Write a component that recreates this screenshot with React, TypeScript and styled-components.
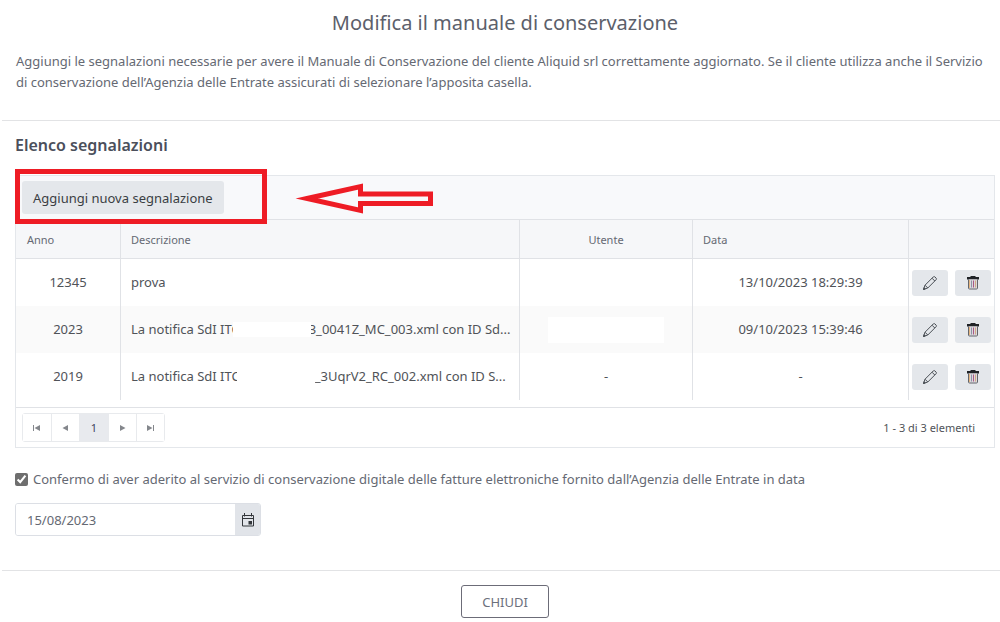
import React from "react";
import styled, { createGlobalStyle } from "styled-components";

const GlobalStyle = createGlobalStyle`
  *, *::before, *::after { box-sizing: border-box; }
  body { margin: 0; background: #fff; }
  body, button, input { font-family: "Noto Sans", "Open Sans", sans-serif; }
`;

const Dialog = styled.main`
  color: #656973;
  font-size: 13px;
  line-height: 21px;
`;

const Intro = styled.header`
  padding: 9px 16px 27px;
`;

const Title = styled.h1`
  margin: 0 0 14px;
  padding-left: 10px;
  color: #5c606b;
  font-size: 20px;
  line-height: 28px;
  font-weight: 400;
  text-align: center;
`;

const Lead = styled.p`
  margin: 0;
`;

const Section = styled.section`
  margin-left: 2px;
  padding: 12px 5px 34px 13px;
  border-top: 1px solid #e2e3e5;
  border-bottom: 1px solid #e2e3e5;
`;

const SectionTitle = styled.h2`
  margin: 0 0 18px;
  color: #4b4f5b;
  font-size: 16px;
  line-height: 24px;
  font-weight: 600;
`;

const Grid = styled.div`
  border: 1px solid #e4e7eb;
`;

const Toolbar = styled.div`
  position: relative;
  display: flex;
  padding: 5px 6px;
  background: #f8f9fb;
`;

const SoftButton = styled.button<{ $compact?: boolean }>`
  display: inline-flex;
  align-items: center;
  justify-content: center;
  width: ${(p) => (p.$compact ? "36px" : "auto")};
  height: ${(p) => (p.$compact ? "26px" : "33px")};
  padding: ${(p) => (p.$compact ? "0" : "0 11px")};
  border: 0;
  border-radius: 3px;
  background: #e4e7eb;
  color: #3a3e43;
  font-size: 13px;
`;

const Highlight = styled.div`
  position: absolute;
  top: -7px;
  left: -1px;
  width: 252px;
  height: 55px;
  border: 5px solid #ee1c25;
  pointer-events: none;
`;

const Pointer = styled.svg`
  position: absolute;
  top: 5px;
  left: 279px;
  pointer-events: none;
`;

const Table = styled.table`
  width: 100%;
  table-layout: fixed;
  border-collapse: separate;
  border-spacing: 0;
  margin-bottom: 7px;
`;

const HeadCell = styled.th<{ $center?: boolean }>`
  height: 40px;
  padding: 0 10px;
  border: solid #e0e2e6;
  border-width: 1px 0 1px 1px;
  background: #f6f7f9;
  color: #656973;
  font-size: 11px;
  font-weight: 400;
  text-align: ${(p) => (p.$center ? "center" : "left")};
  &:first-child { border-left: 0; padding-left: 11px; }
`;

const Row = styled.tr`
  &:nth-child(even) { background: #fafafa; }
`;

const Cell = styled.td<{ $center?: boolean }>`
  height: 47px;
  padding: 0 10px;
  border-left: 1px solid #e0e2e6;
  color: #505358;
  text-align: ${(p) => (p.$center ? "center" : "left")};
  white-space: nowrap;
  &:first-child { border-left: 0; }
`;

const ActionCell = styled(Cell)`
  padding: 0 3px;
`;

const Actions = styled.div`
  display: flex;
  justify-content: space-between;
`;

const Description = styled.div`
  display: flex;
  align-items: center;
`;

const InlineRedaction = styled.span<{ $before: number; $after: number }>`
  position: relative;
  flex: none;
  width: 78px;
  height: 15px;
  margin: 0 ${(p) => -p.$after}px 0 ${(p) => -p.$before}px;
  background: #fff;
`;

const UserRedaction = styled.div`
  width: 116px;
  height: 26px;
  margin: 0 auto;
  background: #fff;
`;

const Pager = styled.nav`
  display: flex;
  align-items: center;
  justify-content: space-between;
  padding: 5px 19px 5px 6px;
  border-top: 1px solid #e0e2e6;
  color: #505358;
  font-size: 11px;
`;

const Pages = styled.div`
  display: flex;
  border: 1px solid #e8eaed;
  border-radius: 3px;
`;

const PageButton = styled.button<{ $current?: boolean }>`
  display: flex;
  align-items: center;
  justify-content: center;
  width: ${(p) => (p.$current ? "29px" : "28px")};
  height: 27px;
  padding: 0;
  border: 0;
  border-left: 1px solid #e8eaed;
  background: ${(p) => (p.$current ? "#e8eaee" : "#fff")};
  color: ${(p) => (p.$current ? "#42455c" : "#84878c")};
  font-size: 11px;
  &:first-child { border-left: 0; }
`;

const Consent = styled.label`
  display: flex;
  align-items: center;
  gap: 5px;
  margin: 21px 0 13px;
`;

const Tick = styled.input`
  width: 13px;
  height: 13px;
  margin: 0;
  accent-color: #6e6e6e;
`;

const DateField = styled.div`
  display: flex;
  width: 246px;
  height: 33px;
  border: 1px solid #dcdfe5;
  border-radius: 3px;
  overflow: hidden;
`;

const DateInput = styled.input`
  flex: 1;
  min-width: 0;
  padding: 1px 11px 0;
  border: 0;
  color: #656973;
  font-size: 13px;
`;

const CalendarButton = styled.button`
  display: flex;
  align-items: center;
  justify-content: center;
  width: 25px;
  padding: 0;
  border: 0;
  background: #e1e4e9;
  color: #33363b;
`;

const Footer = styled.footer`
  display: flex;
  justify-content: center;
  padding: 14px 0 4px 10px;
`;

const CloseButton = styled.button`
  width: 88px;
  height: 33px;
  padding: 0;
  border: 1px solid #6c6c78;
  border-radius: 3px;
  background: #fff;
  color: #6c707c;
  font-size: 13px;
`;

const PencilIcon = () => (
  <svg width="16" height="16" viewBox="0 0 16 16" fill="none" stroke="#4b5056" strokeWidth="1" strokeLinejoin="round" aria-hidden="true">
    <path d="M1.5 14.5 3 10.2 11.3 1.9Q12.1 1.2 12.9 1.9L14.1 3.1Q14.8 3.9 14.1 4.7L5.8 13Z" />
    <path d="M3 10.2 5.8 13M10 3.2l2.8 2.8" />
    <path d="m1.5 14.5.6-1.8 1.2 1.2Z" fill="#3b4046" />
  </svg>
);

const TrashIcon = () => (
  <svg width="14" height="16" viewBox="0 0 14 16" fill="none" aria-hidden="true">
    <path d="M1 2h3.500V1h5v1H13v2.500H1Z" fill="#1f2226" />
    <path d="M3 4.500h8v9H3Z" fill="#dcd9de" />
    <path d="M2.500 4.500v8.500q0 1 1 1h7q1 0 1-1V4.500" stroke="#63656a" />
    <path d="M3.500 5v8" stroke="#e5b681" />
    <path d="M5.500 5.500v7" stroke="#8d93a6" />
    <path d="M7.500 5.500v7" stroke="#a85a86" />
    <path d="M9.500 5.500v7" stroke="#d0a987" />
  </svg>
);

const CalendarIcon = () => (
  <svg width="14" height="14" viewBox="0 0 14 14" fill="none" stroke="currentColor" aria-hidden="true">
    <path d="M1.5 2.5h11v10.5h-11ZM1.5 5.5h11M3.5 0v3.5M10.5 0v3.5" />
    <path d="M7.5 8h3.5v3.5H7.5Z" fill="currentColor" stroke="none" />
  </svg>
);

const pagerShapes = {
  first: "M0 1h1v6H0ZM7 1v6L1.5 4Z",
  prev: "M6 1v6L0.5 4Z",
  next: "M1 1v6l5.5-3Z",
  last: "M0 1v6l5.5-3ZM6 1h1v6H6Z",
};

const PagerIcon = ({ kind }: { kind: keyof typeof pagerShapes }) => (
  <svg width="8" height="8" viewBox="0 0 8 8" fill="currentColor" aria-hidden="true">
    <path d={pagerShapes[kind]} />
  </svg>
);

const rows = [
  { year: "12345", description: "prova", user: null, date: "13/10/2023 18:29:39" },
  {
    year: "2023",
    description: (
      <Description>
        La notifica SdI ITC
        <InlineRedaction $before={7} $after={2} />
        3_0041Z_MC_003.xml con ID Sd...
      </Description>
    ),
    user: <UserRedaction />,
    date: "09/10/2023 15:39:46",
  },
  {
    year: "2019",
    description: (
      <Description>
        La notifica SdI ITC
        <InlineRedaction $before={3} $after={0} />
        _3UqrV2_RC_002.xml con ID S...
      </Description>
    ),
    user: "-",
    date: "-",
  },
];

export default function App() {
  return (
    <Dialog>
      <GlobalStyle />
      <Intro>
        <Title>Modifica il manuale di conservazione</Title>
        <Lead>
          Aggiungi le segnalazioni necessarie per avere il Manuale di Conservazione del cliente Aliquid srl
          correttamente aggiornato. Se il cliente utilizza anche il Servizio di conservazione dell’Agenzia delle
          Entrate assicurati di selezionare l’apposita casella.
        </Lead>
      </Intro>
      <Section>
        <SectionTitle>Elenco segnalazioni</SectionTitle>
        <Grid>
          <Toolbar>
            <SoftButton type="button">Aggiungi nuova segnalazione</SoftButton>
            <Highlight />
            <Pointer width="140" height="34" viewBox="0 0 140 34" fill="none" stroke="#ee1c25" strokeWidth="5" aria-hidden="true">
              <path d="M12 17.5 65.5 5.5V13H135.5V22.5H65.5V29.5Z" strokeMiterlimit="12" />
            </Pointer>
          </Toolbar>
          <Table>
            <colgroup>
              <col style={{ width: 104 }} />
              <col />
              <col style={{ width: 173 }} />
              <col style={{ width: 216 }} />
              <col style={{ width: 86 }} />
            </colgroup>
            <thead>
              <tr>
                <HeadCell scope="col">Anno</HeadCell>
                <HeadCell scope="col">Descrizione</HeadCell>
                <HeadCell scope="col" $center>Utente</HeadCell>
                <HeadCell scope="col">Data</HeadCell>
                <HeadCell scope="col" aria-label="Azioni" />
              </tr>
            </thead>
            <tbody>
              {rows.map((row) => (
                <Row key={row.year}>
                  <Cell $center>{row.year}</Cell>
                  <Cell>{row.description}</Cell>
                  <Cell $center>{row.user}</Cell>
                  <Cell $center>{row.date}</Cell>
                  <ActionCell>
                    <Actions>
                      <SoftButton type="button" $compact aria-label="Modifica"><PencilIcon /></SoftButton>
                      <SoftButton type="button" $compact aria-label="Elimina"><TrashIcon /></SoftButton>
                    </Actions>
                  </ActionCell>
                </Row>
              ))}
            </tbody>
          </Table>
          <Pager>
            <Pages>
              <PageButton type="button" aria-label="Prima pagina"><PagerIcon kind="first" /></PageButton>
              <PageButton type="button" aria-label="Pagina precedente"><PagerIcon kind="prev" /></PageButton>
              <PageButton type="button" $current>1</PageButton>
              <PageButton type="button" aria-label="Pagina successiva"><PagerIcon kind="next" /></PageButton>
              <PageButton type="button" aria-label="Ultima pagina"><PagerIcon kind="last" /></PageButton>
            </Pages>
            <span>1 - 3 di 3 elementi</span>
          </Pager>
        </Grid>
        <Consent>
          <Tick type="checkbox" defaultChecked />
          Confermo di aver aderito al servizio di conservazione digitale delle fatture elettroniche fornito
          dall’Agenzia delle Entrate in data
        </Consent>
        <DateField>
          <DateInput aria-label="Data di adesione" defaultValue="15/08/2023" />
          <CalendarButton type="button" aria-label="Apri calendario"><CalendarIcon /></CalendarButton>
        </DateField>
      </Section>
      <Footer>
        <CloseButton type="button">CHIUDI</CloseButton>
      </Footer>
    </Dialog>
  );
}
